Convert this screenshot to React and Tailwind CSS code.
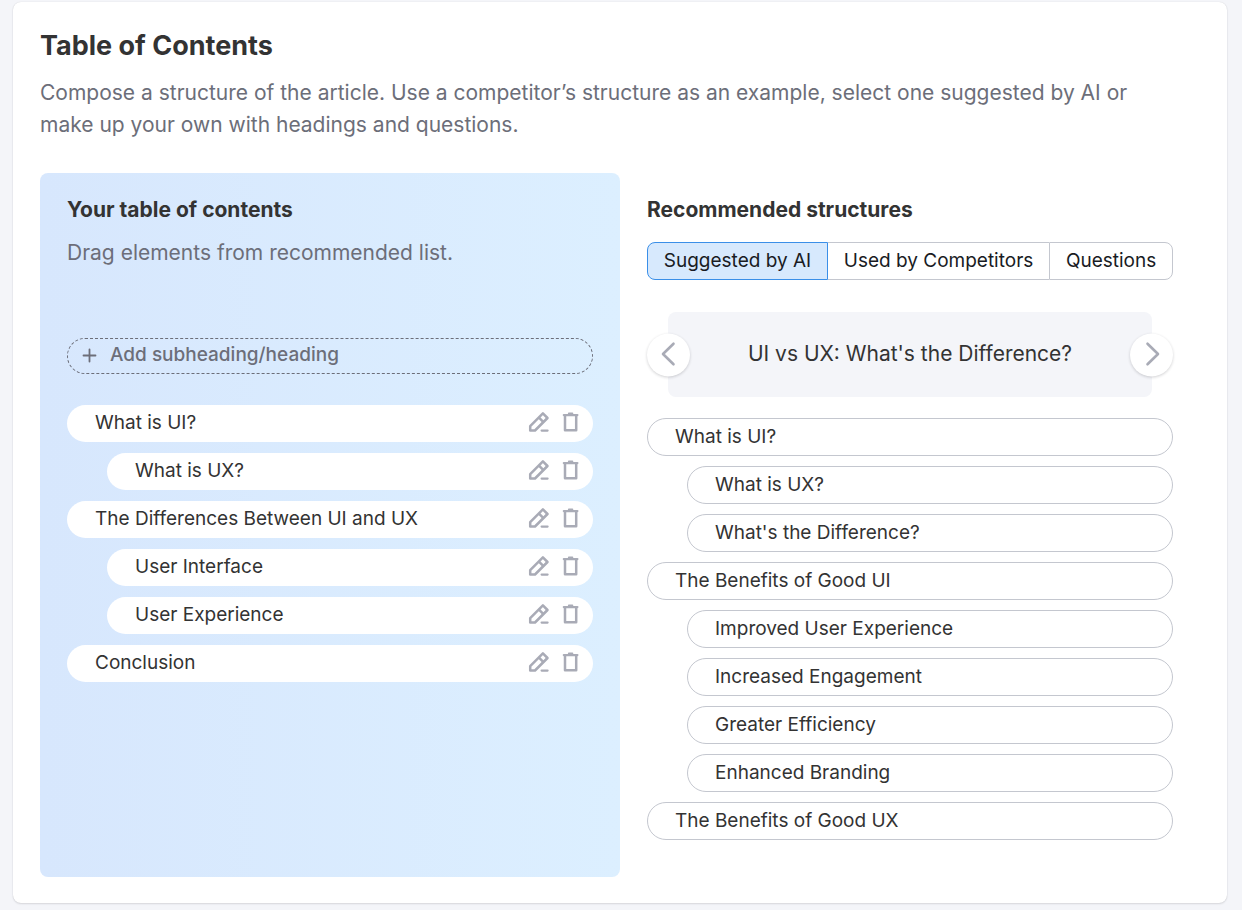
const outline = [
  { id: 1, text: 'What is UI?', sub: false },
  { id: 2, text: 'What is UX?', sub: true },
  { id: 3, text: 'The Differences Between UI and UX', sub: false },
  { id: 4, text: 'User Interface', sub: true },
  { id: 5, text: 'User Experience', sub: true },
  { id: 6, text: 'Conclusion', sub: false },
];

const suggested = [
  { id: 1, text: 'What is UI?', sub: false },
  { id: 2, text: 'What is UX?', sub: true },
  { id: 3, text: "What's the Difference?", sub: true },
  { id: 4, text: 'The Benefits of Good UI', sub: false },
  { id: 5, text: 'Improved User Experience', sub: true },
  { id: 6, text: 'Increased Engagement', sub: true },
  { id: 7, text: 'Greater Efficiency', sub: true },
  { id: 8, text: 'Enhanced Branding', sub: true },
  { id: 9, text: 'The Benefits of Good UX', sub: false },
];

function PencilIcon() {
  return (
    <svg width="22" height="22" viewBox="0 0 22 22" fill="none" stroke="currentColor" strokeWidth="2.5" strokeLinejoin="round" aria-hidden="true">
      <path d="M2.2 19.5V15.1L14.9 2.4L19.5 7L7 19.5Z" />
      <path d="M11 6.7L15.2 10.9" />
      <path d="M13.6 19.6H19.6" strokeWidth="2.2" strokeLinecap="round" />
    </svg>
  );
}

function TrashIcon() {
  return (
    <svg width="22" height="22" viewBox="0 0 22 22" fill="none" stroke="currentColor" strokeWidth="2.5" strokeLinejoin="round" aria-hidden="true">
      <path d="M5 4.5V19.3H16.2V4.5" />
      <path d="M3.8 4.1H17.4" strokeLinecap="round" strokeWidth="2.2" />
      <path d="M8.8 2.4H12.4" strokeLinecap="round" strokeWidth="1.8" />
    </svg>
  );
}

function Chevron({ d }) {
  return (
    <svg width="28" height="28" viewBox="0 0 28 28" fill="none" stroke="currentColor" strokeWidth="2.6" strokeLinecap="round" strokeLinejoin="round" aria-hidden="true">
      <path d={d} />
    </svg>
  );
}

function OutlineRow({ text, sub }) {
  return (
    <li className={sub ? 'pl-10' : ''}>
      <div className="flex items-start rounded-full bg-white pt-1 pr-[11px] pb-[5px] pl-7">
        <span className="grow text-[19px] leading-7">{text}</span>
        <span className="flex gap-[10px] pt-[2px] text-[#a9abb6]">
          <button type="button" aria-label={`Edit ${text}`}><PencilIcon /></button>
          <button type="button" aria-label={`Delete ${text}`}><TrashIcon /></button>
        </span>
      </div>
    </li>
  );
}

const arrow =
  'absolute top-1/2 flex size-[43px] -translate-y-1/2 items-center justify-center rounded-full bg-white text-[#a9abb6] shadow-[0_1px_3px_rgba(25,27,35,0.2)]';

export default function App() {
  return (
    <main className="min-h-screen bg-[#f4f5f9] pt-[2px] pr-[15px] pb-[7px] pl-[13px] font-['Inter',sans-serif] text-[#333333]">
      <section className="rounded-lg bg-white px-[27px] pt-7 pb-[26px] shadow-[0_0_1px_rgba(25,27,35,0.16),0_1px_2px_rgba(25,27,35,0.12)]">
        <h1 className="text-[27px] leading-8 font-bold">Table of Contents</h1>
        <p className="mt-[15px] pr-7 text-[21px] leading-8 text-[#6c6e79]">
          Compose a structure of the article. Use a competitor’s structure as an example, select one suggested by AI or make up your own with headings and questions.
        </p>

        <div className="mt-8 grid grid-cols-2">
          <section className="rounded-lg bg-linear-to-r from-[#d7e7fd] to-[#dcefff] px-[27px] pt-[23px] pb-[37px]">
            <h2 className="text-[21px] leading-7 font-bold">Your table of contents</h2>
            <p className="mt-[13px] text-[21px] leading-8 text-[#6c6e79]">Drag elements from recommended list.</p>
            <button
              type="button"
              className="mt-[69px] flex w-full items-center gap-3 rounded-full border border-dashed border-[#6c6e79] px-[14px] pt-[2px] pb-1 text-[19px] leading-7 font-medium text-[#6c6e79]"
            >
              <svg width="16" height="16" viewBox="0 0 16 16" fill="none" stroke="currentColor" strokeWidth="1.8" aria-hidden="true">
                <path d="M7.5 2.5V14.5M1.5 8.5H13.5" strokeLinecap="round" />
              </svg>
              Add subheading/heading
            </button>
            <ul className="mt-[31px] flex flex-col gap-[11px]">
              {outline.map((item) => <OutlineRow key={item.id} text={item.text} sub={item.sub} />)}
            </ul>
          </section>

          <section className="px-[27px] pt-[23px] pb-[37px]">
            <h2 className="text-[21px] leading-7 font-bold">Recommended structures</h2>
            <div className="mt-[18px] flex text-[19px] leading-7 text-[#191b23]">
              <button type="button" aria-pressed="true" className="grow rounded-l-lg border border-[#3a8fe8] bg-[#d7e9fd] py-1">Suggested by AI</button>
              <button type="button" aria-pressed="false" className="grow border-y border-[#c4c7cf] py-1">Used by Competitors</button>
              <button type="button" aria-pressed="false" className="grow rounded-r-lg border border-[#c4c7cf] py-1">Questions</button>
            </div>

            <div className="relative mt-8 px-[21px]">
              <p className="rounded-lg bg-[#f4f5f9] pt-[26px] pb-[27px] text-center text-[21px] leading-8">UI vs UX: What's the Difference?</p>
              <button type="button" aria-label="Previous structure" className={`${arrow} left-0`}><Chevron d="M18.5 3.2L8 13.5L18.5 23.8" /></button>
              <button type="button" aria-label="Next structure" className={`${arrow} right-0`}><Chevron d="M9.5 3.2L20 13.5L9.5 23.8" /></button>
            </div>

            <ul className="mt-[21px] flex flex-col gap-[10px] text-[19px] leading-7">
              {suggested.map((item) => (
                <li key={item.id} className={item.sub ? 'pl-10' : ''}>
                  <div className="rounded-full border border-[#c4c7cf] px-[27px] py-1">{item.text}</div>
                </li>
              ))}
            </ul>
          </section>
        </div>
      </section>
    </main>
  );
}
